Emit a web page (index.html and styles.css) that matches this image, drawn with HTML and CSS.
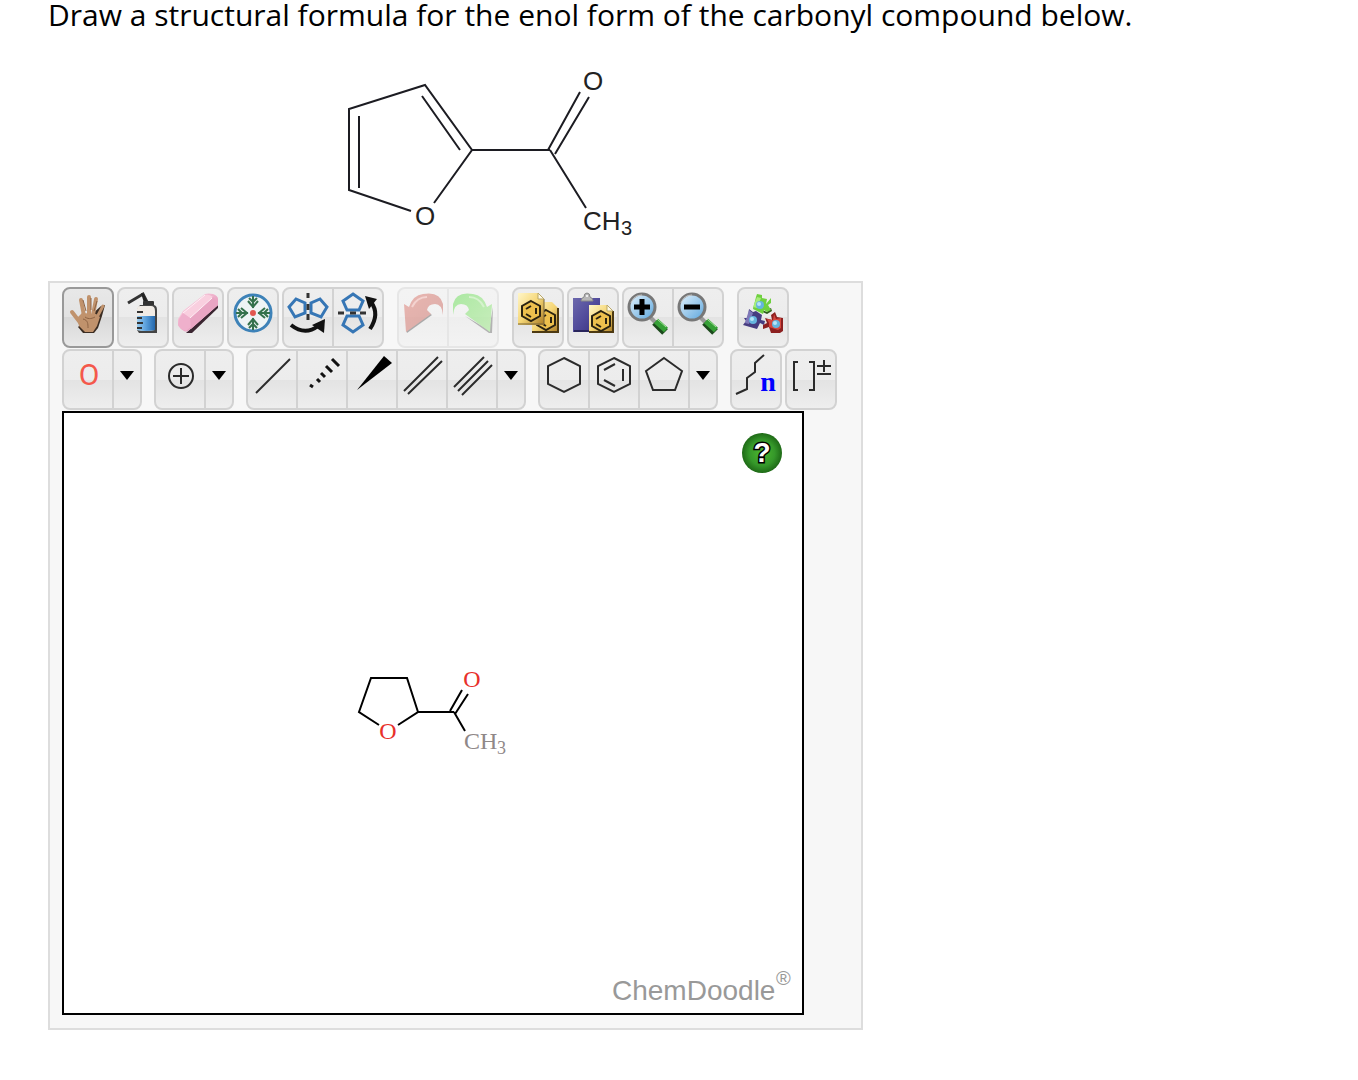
FILE: index.html
```html
<!DOCTYPE html>
<html lang="en">

<head>
    <meta charset="UTF-8">
    <meta name="viewport" content="width=device-width, initial-scale=1.0">
    <title>Enol form</title>
    <link rel="stylesheet" href="styles.css">
</head>

<body>
    <main class="question">
        <p class="prompt">Draw a structural formula for the enol form of the carbonyl compound below.</p>

        <svg class="compound" viewBox="0 0 300 190" role="img" aria-label="2-acetylfuran">
            <g class="bonds">
                <path d="M71 151L9 130V49L85 25L132 90L94 143" />
                <path d="M19 56V128M82 36L120 90M132 90H210" />
                <path d="M208 90L240 32M215 94L249 37M210 90L246 148" />
            </g>
            <text x="85" y="165" text-anchor="middle">O</text>
            <text x="253" y="30" text-anchor="middle">O</text>
            <text x="243" y="170">CH</text>
            <text x="281" y="175" class="sub">3</text>
        </svg>

        <div class="sketcher">
            <div class="toolbar toolbar-main">
                <div class="cluster">
                    <div class="group">
                        <button type="button" class="active" aria-label="Move">
                            <svg viewBox="0 0 40 40">
                                <path d="M33 13l4-1-3 11-4 12-4 5H15l-5-6z" fill="#3a2c22" />
                                <g fill="none" stroke="#c0926c" stroke-linecap="round" stroke-width="4">
                                    <path d="M16 23L13 7M21 22V4M25 22L28 6M14 32L4 19" />
                                    <path d="M28 26L35 13" stroke-width="3" />
                                </g>
                                <path d="M14 20l14 1 4 3-3 9-4 6h-8l-6-6-2-8z" fill="#c0926c" />
                                <path d="M15 7l3 11M23 5v12M29 8l-3 10M17 24c4 3 8 1 10 0M15 26c5 1 5 5 5 9" fill="none" stroke="#8d6344" />
                            </svg>
                        </button>
                    </div>
                    <div class="group">
                        <button type="button" aria-label="Clear">
                            <svg viewBox="0 0 40 40">
                                <defs>
                                    <linearGradient id="liquid">
                                        <stop offset="0" stop-color="#9ccff2" />
                                        <stop offset=".5" stop-color="#5a9fdb" />
                                        <stop offset="1" stop-color="#2468ad" />
                                    </linearGradient>
                                </defs>
                                <path d="M5 10L20 1l4 8" fill="none" stroke="#333" stroke-width="3" />
                                <path d="M18 0l3 1 4 9h-4z" fill="#222" />
                                <rect x="20" y="8" width="11" height="6" rx="1" fill="#333" />
                                <path d="M17 12h13q4 0 4 5v23H16l-2-3V16z" fill="#444" />
                                <path d="M17 13h11q4 0 4 5v19q-9 2-18 0V16q0-3 3-3z" fill="#f1ece6" />
                                <path d="M14 23h18v14q-9 2-18 0z" fill="url(#liquid)" />
                                <path d="M14 19h6M14 25h5M14 30h6M14 35h5" stroke="#333" stroke-width="2" />
                            </svg>
                        </button>
                    </div>
                    <div class="group">
                        <button type="button" aria-label="Erase">
                            <svg viewBox="0 0 40 40">
                                <defs>
                                    <linearGradient id="rubber" x2="1" y2="1">
                                        <stop offset=".2" stop-color="#fbd3e3" />
                                        <stop offset=".6" stop-color="#e9a2c1" />
                                        <stop offset="1" stop-color="#b0587f" />
                                    </linearGradient>
                                </defs>
                                <path d="M8 40L40 12v3L14 40z" fill="#3a2530" />
                                <path d="M0 26L5 18 27 1q3-1 8 0 5 2 5 5v6L10 38q-2 1-4 0-4-2-6-6z" fill="url(#rubber)" />
                                <path d="M5 20L27 2q4-1 8 2L12 25z" fill="#f9cfdf" />
                                <path d="M12 25L35 4l5 5v3L13 36z" fill="#e9a5c3" />
                                <path d="M1 26l4-6 7 5 1 9-5 4q-6-2-8-6z" fill="#efb0cc" />
                                <path d="M5 20L27 2M12 25L34 5" stroke="#fff1f6" />
                            </svg>
                        </button>
                    </div>
                    <div class="group">
                        <button type="button" aria-label="Clean structure">
                            <svg viewBox="0 0 40 40" fill="none">
                                <circle cx="20" cy="20" r="18" fill="#eef4f5" stroke="#3d82b8" stroke-width="3" />
                                <g stroke="#34714c" stroke-width="2">
                                    <path d="M20 3v12M15 8l5 6 5-6M16 5l4 4 4-4" />
                                    <path d="M20 37V25M15 32l5-6 5 6M16 35l4-4 4 4" />
                                    <path d="M3 20h12M8 15l6 5-6 5M5 16l4 4-4 4" />
                                    <path d="M37 20H25M32 15l-6 5 6 5M35 16l-4 4 4 4" />
                                </g>
                                <circle cx="20" cy="20" r="3" fill="#e25850" />
                            </svg>
                        </button>
                    </div>
                    <div class="group">
                        <button type="button" aria-label="Flip horizontally">
                            <svg viewBox="0 0 40 40" fill="none">
                                <path d="M1 14L8 6l9 4v10L7 24zM39 14L32 6l-9 4v10l10 4z" stroke="#3676b5" stroke-width="3" />
                                <path d="M20 0v5M20 11v6M20 21v6" stroke="#333" stroke-width="3" />
                                <path d="M3 32q14 11 27 1" stroke="#111" stroke-width="4" />
                                <path d="M37 26L24 32l12 8z" fill="#111" />
                            </svg>
                        </button>
                        <button type="button" aria-label="Flip vertically">
                            <svg viewBox="0 0 40 40" fill="none">
                                <path d="M15 1l10 7-4 9H9L5 8zM9 23h12l4 9-10 7-10-7z" stroke="#3676b5" stroke-width="3" />
                                <path d="M0 20h6M12 20h6M22 20h6" stroke="#333" stroke-width="3" />
                                <path d="M32 36q10-15 1-27" stroke="#111" stroke-width="4" />
                                <path d="M27 3l12 3-8 10z" fill="#111" />
                            </svg>
                        </button>
                    </div>
                </div>

                <div class="cluster">
                    <div class="group">
                        <button type="button" disabled aria-label="Undo">
                            <svg viewBox="0 0 40 40">
                                <defs>
                                    <linearGradient id="undo" y2="1">
                                        <stop offset="0" stop-color="#e0796f" />
                                        <stop offset="1" stop-color="#c66a62" />
                                    </linearGradient>
                                </defs>
                                <path d="M4 40l25-18-3-2L3 37z" fill="#666" />
                                <path d="M3 39L1 11l5 3Q10 2 20 1q17-3 20 10v11q-1-11-8-11-7 0-8 6l4 4z" fill="url(#undo)" />
                                <path d="M9 14Q14 4 24 4" fill="none" stroke="#f5b5ae" stroke-width="2" />
                            </svg>
                        </button>
                        <button type="button" disabled aria-label="Redo">
                            <svg viewBox="0 0 40 40">
                                <defs>
                                    <linearGradient id="redo" y2="1">
                                        <stop offset="0" stop-color="#67df55" />
                                        <stop offset="1" stop-color="#a0ea88" />
                                    </linearGradient>
                                </defs>
                                <path d="M12 23l24 17h3l1-26-4 23z" fill="#777" />
                                <path d="M37 39l2-28-5 3Q30 2 20 1 3-2 0 11v11q1-11 8-11 7 0 8 6l-4 4z" fill="url(#redo)" />
                                <path d="M31 14Q26 4 16 4" fill="none" stroke="#baf3aa" stroke-width="2" />
                            </svg>
                        </button>
                    </div>
                </div>

                <div class="cluster">
                    <div class="group">
                        <button type="button" aria-label="Copy">
                            <svg viewBox="0 0 40 40">
                                <defs>
                                    <linearGradient id="sheet" x2="1" y2="1">
                                        <stop offset="0" stop-color="#fff6c8" />
                                        <stop offset=".5" stop-color="#f5d676" />
                                        <stop offset="1" stop-color="#a97b22" />
                                    </linearGradient>
                                    <g id="ring">
                                        <path d="M0-10l9 5V5l-9 5-9-5V-5z" fill="#ecc04d" stroke="#292312" stroke-width="2" />
                                        <path d="M-5-2l5-3M-5 3l5 3M5-3v6" fill="none" stroke="#292312" stroke-width="2" />
                                    </g>
                                </defs>
                                <path d="M14 9h20l6 6v25H14z" fill="url(#sheet)" />
                                <path d="M14 39h26V15" fill="none" stroke="#4d3a12" stroke-width="2" />
                                <use href="#ring" x="28" y="27" />
                                <path d="M0 0h20l6 6v26H0z" fill="url(#sheet)" />
                                <path d="M0 31h26V6" fill="none" stroke="#77653a" />
                                <path d="M20 0v6h6z" fill="#fffae6" stroke="#b9a768" />
                                <use href="#ring" x="13" y="18" />
                            </svg>
                        </button>
                    </div>
                    <div class="group">
                        <button type="button" aria-label="Paste">
                            <svg viewBox="0 0 40 40">
                                <defs>
                                    <linearGradient id="board" x2="1" y2="1">
                                        <stop offset="0" stop-color="#6c68ad" />
                                        <stop offset=".5" stop-color="#514b9b" />
                                        <stop offset="1" stop-color="#37307d" />
                                    </linearGradient>
                                </defs>
                                <path d="M0 5h27v34H0z" fill="url(#board)" />
                                <path d="M1 38h17" stroke="#29255c" stroke-width="2" />
                                <path d="M8 8q0-3 3-4 0-4 3-4t3 4q3 1 3 4z" fill="#b7b7b7" stroke="#888" />
                                <circle cx="14" cy="3" r="1" fill="#fff" />
                                <path d="M16 12h18l6 6v22H16z" fill="url(#sheet)" />
                                <path d="M16 39h24V18" fill="none" stroke="#4d3a12" stroke-width="2" />
                                <path d="M34 12v6h6z" fill="#fffae6" stroke="#b9a768" />
                                <use href="#ring" x="28" y="28" />
                            </svg>
                        </button>
                    </div>
                    <div class="group">
                        <button type="button" aria-label="Zoom in">
                            <svg viewBox="0 0 40 40">
                                <defs>
                                    <linearGradient id="lens" y2="1">
                                        <stop offset="0" stop-color="#e3f2fc" />
                                        <stop offset="1" stop-color="#5ba5dc" />
                                    </linearGradient>
                                    <g id="magnifier">
                                        <path d="M22 24l5 5" stroke="#999" stroke-width="4" />
                                        <path d="M27 29l10 10" stroke="#1d4a1d" stroke-width="8" />
                                        <path d="M28 28l10 9" stroke="#35a036" stroke-width="6" />
                                        <path d="M29 26l9 8" stroke="#a2e297" />
                                        <circle cx="14" cy="14" r="13" fill="url(#lens)" stroke="#777" stroke-width="3" />
                                        <path d="M3 10Q6 2 14 2" fill="none" stroke="#ccc" />
                                    </g>
                                </defs>
                                <use href="#magnifier" />
                                <path d="M6 14h16M14 6v16" stroke="#000" stroke-width="5" />
                            </svg>
                        </button>
                        <button type="button" aria-label="Zoom out">
                            <svg viewBox="0 0 40 40">
                                <use href="#magnifier" />
                                <path d="M6 14h16" stroke="#000" stroke-width="5" />
                            </svg>
                        </button>
                    </div>
                </div>

                <div class="cluster">
                    <div class="group">
                        <button type="button" aria-label="Templates">
                            <svg viewBox="0 0 40 40">
                                <path d="M10 15l14 6 5-3-1-3-2 1-2 3-12-5z" fill="#2d5a1c" />
                                <path d="M13 4l1-3 5 1v3l5 1-1 5 5-6v5l-3 2 3 5-4 2-3-2-1 4-10-5z" fill="#6fd13f" />
                                <path d="M14 4l4 1-4 10-4-1z" fill="#a6ec7c" />
                                <path d="M6 16l4 3 3-1 6 4-1 5 4 1-1 4-4-2-3 6-7-2-7-2 3-4-2-3h4z" fill="#463c80" />
                                <path d="M6 17l4 3-4 11-4-1z" fill="#7f78b8" />
                                <path d="M22 25l7 2-1-5 4-3 2 5 6 1v13l-3 2h-9l-2-6-6 2v-4l4-2z" fill="#8c2020" />
                                <path d="M24 26l6 1 1-6 2 5 5-1v10l-3 2-9-3v-4z" fill="#d5473e" />
                                <g fill="#65b5df">
                                    <circle cx="17" cy="12" r="4" />
                                    <circle cx="10" cy="27" r="4" />
                                    <circle cx="33" cy="31" r="4" />
                                </g>
                                <g fill="#b8e4f7">
                                    <circle cx="16" cy="11" r="2" />
                                    <circle cx="9" cy="26" r="2" />
                                    <circle cx="32" cy="30" r="2" />
                                </g>
                            </svg>
                        </button>
                    </div>
                </div>
            </div>

            <div class="toolbar toolbar-draw">
                <div class="cluster">
                    <div class="group">
                        <button type="button" aria-label="Oxygen">
                            <svg viewBox="0 0 40 40"><text x="21" y="30" class="oxygen">O</text></svg>
                        </button>
                        <button type="button" class="more" aria-label="More elements">
                            <svg viewBox="0 0 16 40"><path d="M1 16h14l-7 9z" /></svg>
                        </button>
                    </div>
                </div>

                <div class="cluster">
                    <div class="group">
                        <button type="button" aria-label="Increase charge">
                            <svg class="line" viewBox="0 0 40 40">
                                <circle cx="21" cy="21" r="12" />
                                <path d="M13 21h16M21 13v16" />
                            </svg>
                        </button>
                        <button type="button" class="more" aria-label="More attributes">
                            <svg viewBox="0 0 16 40"><path d="M1 16h14l-7 9z" /></svg>
                        </button>
                    </div>
                </div>

                <div class="cluster">
                    <div class="group">
                        <button type="button" aria-label="Single bond">
                            <svg class="line" viewBox="0 0 40 40"><path d="M4 38L38 4" /></svg>
                        </button>
                        <button type="button" aria-label="Recessed bond">
                            <svg class="line hash" viewBox="0 0 40 40">
                                <path d="M8 30l3 2M15 24l3 3M19 18l4 4M24 11l6 6M30 4l7 7" />
                            </svg>
                        </button>
                        <button type="button" aria-label="Protruding bond">
                            <svg viewBox="0 0 40 40"><path d="M5 35L32 1l8 7z" /></svg>
                        </button>
                        <button type="button" aria-label="Double bond">
                            <svg class="line" viewBox="0 0 40 40"><path d="M2 36L36 2M6 39L40 6" /></svg>
                        </button>
                        <button type="button" aria-label="Triple bond">
                            <svg class="line" viewBox="0 0 40 40"><path d="M2 32L32 2M6 36L36 6M10 40L40 10" /></svg>
                        </button>
                        <button type="button" class="more" aria-label="More bonds">
                            <svg viewBox="0 0 16 40"><path d="M1 16h14l-7 9z" /></svg>
                        </button>
                    </div>
                </div>

                <div class="cluster">
                    <div class="group">
                        <button type="button" aria-label="Cyclohexane ring">
                            <svg class="line" viewBox="0 0 40 40"><path d="M20 3l16 8v18l-16 8-16-8V11z" /></svg>
                        </button>
                        <button type="button" aria-label="Benzene ring">
                            <svg class="line" viewBox="0 0 40 40">
                                <path d="M20 3l16 8v18l-16 8-16-8V11z" />
                                <path d="M10 15l11-6M29 14v12M10 25l11 6" />
                            </svg>
                        </button>
                        <button type="button" aria-label="Cyclopentane ring">
                            <svg class="line" viewBox="0 0 40 40"><path d="M20 3l18 13-7 19H9L2 16z" /></svg>
                        </button>
                        <button type="button" class="more" aria-label="More rings">
                            <svg viewBox="0 0 16 40"><path d="M1 16h14l-7 9z" /></svg>
                        </button>
                    </div>
                </div>

                <div class="cluster">
                    <div class="group">
                        <button type="button" aria-label="Chain">
                            <svg class="line" viewBox="0 0 40 40">
                                <path d="M0 39l11-5V23l8-6V8l9-8" />
                                <text x="32" y="36" class="count">n</text>
                            </svg>
                        </button>
                    </div>
                    <div class="group">
                        <button type="button" aria-label="Brackets and charge">
                            <svg class="line" viewBox="0 0 40 40">
                                <path d="M7 7H3v28h4M18 7h5v28h-5M26 11h14M33 5v12M26 19h14" />
                            </svg>
                        </button>
                    </div>
                </div>
            </div>

            <div class="canvas">
                <svg class="drawing" viewBox="0 0 738 600" role="img" aria-label="Current structure">
                    <g class="bonds">
                        <path d="M315 312L295 299L307 265H343L354 299L334 312" />
                        <path d="M354 299H390M386 298L398 277M391 301L404 281M390 299L401 318" />
                    </g>
                    <text x="324" y="326" class="atom-o">O</text>
                    <text x="408" y="274" class="atom-o">O</text>
                    <text x="400" y="336" class="atom-c">CH</text>
                    <text x="433" y="341" class="atom-c sub">3</text>
                    <text x="548" y="587" class="brand">ChemDoodle</text>
                    <text x="712" y="572" class="brand mark">®</text>
                </svg>
                <button type="button" class="help" aria-label="Help">
                    <svg viewBox="0 0 40 40"><text x="20" y="29">?</text></svg>
                </button>
            </div>
        </div>
    </main>
</body>

</html>
```

FILE: styles.css
```css
* {
    box-sizing: border-box;
    margin: 0;
    padding: 0;
}

body {
    background-color: white;
    color: black;
    font-family: "Open Sans", "Noto Sans", sans-serif;
}

.question {
    padding: 0 48px 48px;
}

.prompt {
    height: 60px;
    font-size: 30px;
    line-height: 30px;
}

/* compound given in the question */
.compound {
    display: block;
    width: 300px;
    margin: 0 0 31px 292px;
    font-family: "Liberation Sans", Arial, sans-serif;
    font-size: 26px;
    fill: #222;
}

.bonds {
    fill: none;
    stroke: #1c1c22;
    stroke-width: 2;
}

.compound .sub {
    font-size: 20px;
}

/* sketcher */
.sketcher {
    max-width: 815px;
    padding: 4px 12px 13px;
    border: 2px solid #ddd;
    background-color: #f7f7f7;
}

.toolbar {
    display: flex;
    flex-wrap: wrap;
    margin-bottom: 1px;
}

.toolbar-main {
    column-gap: 13px;
}

.toolbar-draw {
    column-gap: 12px;
}

.cluster {
    display: flex;
    gap: 3px;
}

.group {
    display: flex;
}

.group button {
    width: 52px;
    height: 61px;
    padding: 4px 4px 13px;
    border: 2px solid #d2d2d2;
    background: linear-gradient(#eee, #ececec 50%, #e3e3e3 50%, #eee);
}

.group button + button {
    margin-left: -2px;
}

.group button:first-child {
    border-top-left-radius: 8px;
    border-bottom-left-radius: 8px;
}

.group button:last-child {
    border-top-right-radius: 8px;
    border-bottom-right-radius: 8px;
}

.group button.active {
    border-color: #999;
    background: linear-gradient(#e8e8e8, #e2e2e2 50%, #d8d8d8 50%, #e8e8e8);
}

.group button:disabled {
    border-color: #e6e6e6;
    background: linear-gradient(#f3f3f3, #f2f2f2 50%, #eee 50%, #f3f3f3);
}

.group button:disabled svg {
    opacity: 0.5;
}

.group button.more {
    width: 30px;
    padding: 4px 5px 13px;
}

.group svg {
    display: block;
    width: 100%;
    height: 40px;
    overflow: visible;
}

.line {
    fill: none;
    stroke: #2b2b2b;
    stroke-width: 2;
}

.hash {
    stroke: #111;
    stroke-width: 3;
}

.oxygen {
    fill: #f4584b;
    font-family: Roboto, sans-serif;
    font-size: 30px;
    text-anchor: middle;
}

.count {
    fill: #00f;
    stroke: none;
    font-family: "Liberation Serif", "Times New Roman", serif;
    font-size: 28px;
    font-weight: bold;
    text-anchor: middle;
}

/* drawing area */
.canvas {
    position: relative;
    max-width: 742px;
    border: 2px solid black;
    background-color: white;
}

.drawing {
    display: block;
    width: 100%;
    font-family: "Liberation Serif", "Times New Roman", serif;
    font-size: 24px;
}

.drawing .bonds {
    stroke: black;
}

.atom-o {
    fill: #e8302a;
    text-anchor: middle;
}

.atom-c {
    fill: #8f8888;
}

.drawing .sub {
    font-size: 18px;
}

.brand {
    fill: #999;
    font-family: "Liberation Sans", Arial, sans-serif;
    font-size: 28px;
}

.mark {
    font-size: 20px;
}

.help {
    position: absolute;
    top: 20px;
    right: 20px;
    width: 40px;
    height: 40px;
    border: none;
    border-radius: 50%;
    background: radial-gradient(#4db82f, #35982a 45%, #1f6b17 70%);
}

.help svg {
    display: block;
}

.help text {
    fill: white;
    stroke: black;
    stroke-width: 3;
    paint-order: stroke;
    font-family: "Liberation Sans", Arial, sans-serif;
    font-size: 28px;
    font-weight: bold;
    text-anchor: middle;
}
```
